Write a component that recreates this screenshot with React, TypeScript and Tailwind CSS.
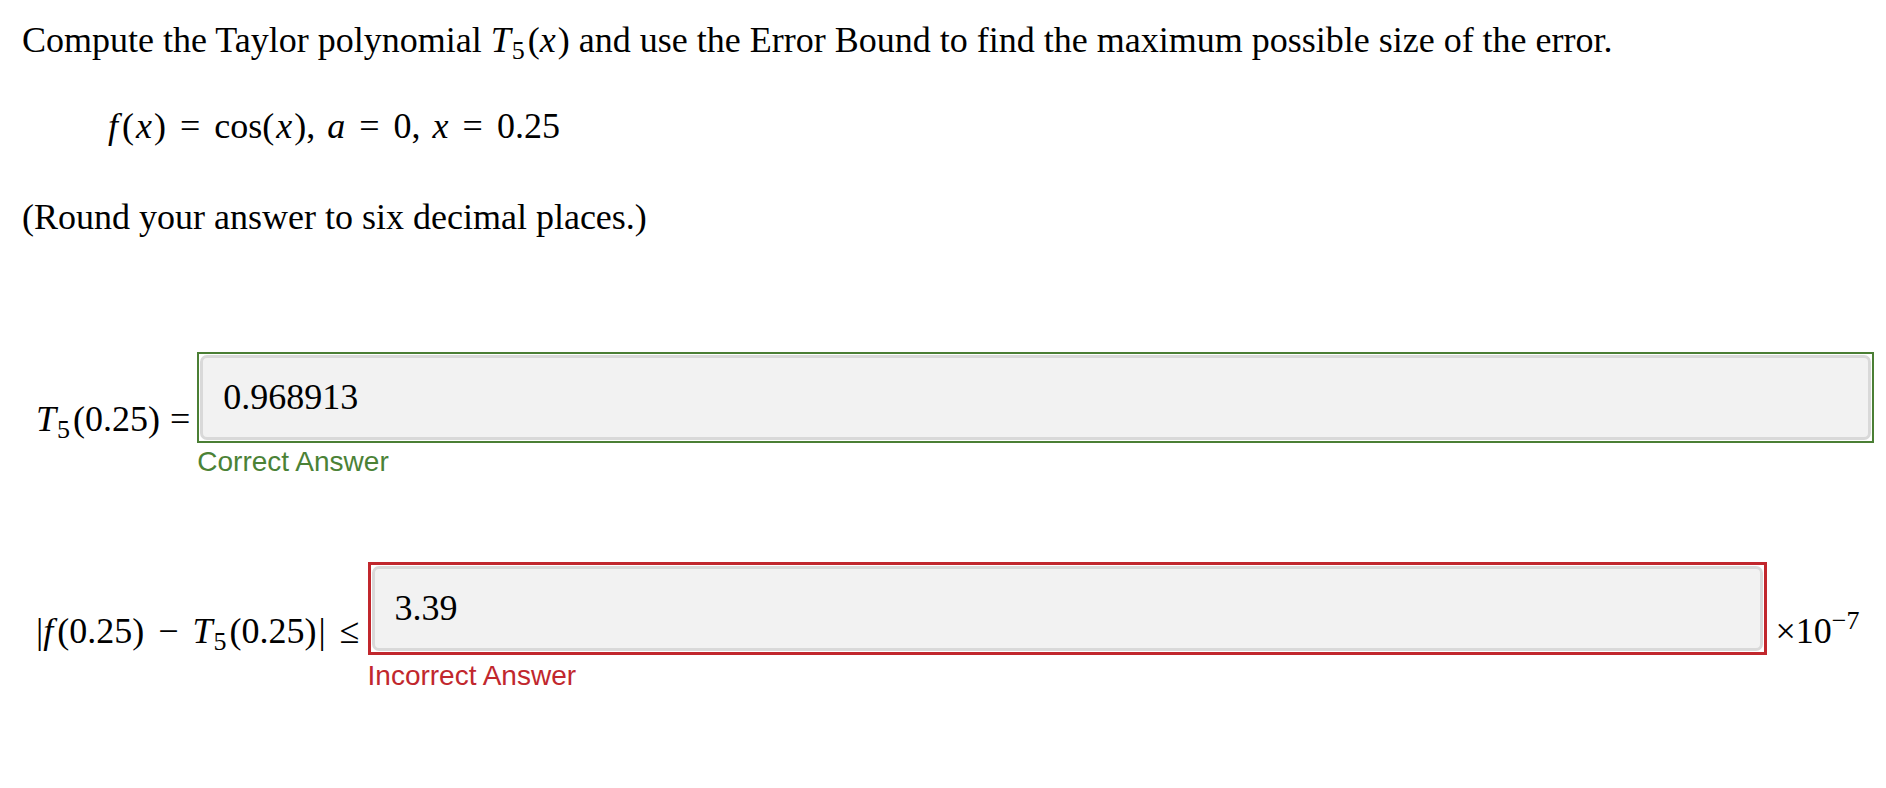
import React from "react"

const serif = "font-['Liberation_Serif','Times_New_Roman',serif]"
const sans = "font-['Liberation_Sans',Arial,sans-serif]"

function V({ children, r = false }: { children: React.ReactNode; r?: boolean }) {
  return <span className={r ? "mr-[4px] italic" : "italic"}>{children}</span>
}

function Sub({ children }: { children: React.ReactNode }) {
  return <span className="relative top-[7px] ml-[1px] mr-[3px] text-[26px]">{children}</span>
}

function Eq() {
  return <span className="mx-[14px]">=</span>
}

function AnswerBox({
  value,
  border,
  width,
}: {
  value: string
  border: string
  width: string
}) {
  return (
    <div className={`${border} ${width} bg-white p-px`}>
      <div className="h-[85px] rounded-[7px] border-[3px] border-[#d9d9d9] bg-[#f2f2f2] pl-[20px] pt-[12px]">
        <span className={`${serif} text-[36px] leading-[40px] text-black`}>{value}</span>
      </div>
    </div>
  )
}

export default function App() {
  return (
    <div className={`${serif} min-h-[788px] w-full bg-white text-[36px] text-black`}>
      <div className="pl-[22px] pt-[18px]">
        <p className="h-[44px] leading-[44px]">
          Compute the Taylor polynomial{" "}
          <span>
            <V>T</V>
            <Sub>5</Sub>(<V>x</V>
            <span className="ml-[2px]">)</span>
          </span>{" "}
          and use the Error Bound to find the maximum possible size of the error.
        </p>

        <p className="mt-[42px] h-[44px] pl-[86px] leading-[44px]">
          <V r>f</V>(<span className="mx-[2px] italic">x</span>)<Eq />
          cos(<span className="mx-[2px] italic">x</span>),<span className="ml-[12px]" />
          <V>a</V>
          <Eq />
          0,<span className="ml-[12px]" />
          <V>x</V>
          <Eq />
          0.25
        </p>

        <p className="mt-[47px] h-[44px] leading-[44px]">(Round your answer to six decimal places.)</p>
      </div>

      <div className="mt-[113px] flex">
        <div className="ml-[36px] mr-[7px] flex h-[91px] items-end leading-[40px]">
          <span>
            <V>T</V>
            <Sub>5</Sub>(0.25)<span className="ml-[10px]">=</span>
          </span>
        </div>
        <div className="flex flex-col">
          <AnswerBox value="0.968913" border="border-2 border-[#4b7f35]" width="w-[1677px]" />
          <span className={`${sans} mt-[3px] text-[28px] leading-[32px] text-[#4b8236]`}>Correct Answer</span>
        </div>
      </div>

      <div className="mt-[84px] flex">
        <div className="ml-[36px] mr-[8px] flex h-[93px] items-end leading-[40px]">
          <span>
            |<V r>f</V>(0.25)<span className="mx-[14px]">−</span>
            <V>T</V>
            <Sub>5</Sub>(0.25)
            <span className="ml-[2px]">|</span>
            <span className="ml-[14px]">≤</span>
          </span>
        </div>
        <div className="flex flex-col">
          <AnswerBox value="3.39" border="border-[3px] border-[#c1272d]" width="w-[1399px]" />
          <span className={`${sans} mt-[5px] text-[28px] leading-[32px] text-[#c1272d]`}>Incorrect Answer</span>
        </div>
        <div className="ml-[9px] flex h-[93px] items-end leading-[40px]">
          <span>
            ×10<span className="relative -top-[14px] text-[26px]">−7</span>
          </span>
        </div>
      </div>
    </div>
  )
}
